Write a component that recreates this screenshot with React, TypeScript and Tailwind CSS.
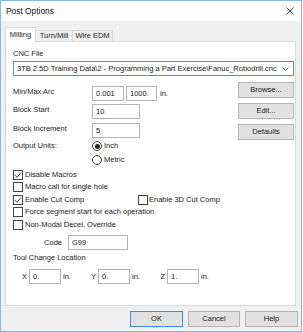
import React from "react";

const font = { fontFamily: '"Liberation Sans", Arial, sans-serif' };

function TextBox({ value, w }: { value: string; w: string }) {
  return (
    <div className={`${w} h-[15px] bg-white border border-[#b4b4b4] flex items-center pl-[3px] text-[7.5px] text-[#1a1a1a] leading-none`}>
      {value}
    </div>
  );
}

function Check({ checked }: { checked?: boolean }) {
  return (
    <div className="w-[10px] h-[10px] border border-[#444] bg-white flex items-center justify-center shrink-0">
      {checked && (
        <svg width="8" height="8" viewBox="0 0 8 8">
          <path d="M1 4.2 L3 6.3 L7 1.5" stroke="#333" strokeWidth="1" fill="none" />
        </svg>
      )}
    </div>
  );
}

function Radio({ on }: { on?: boolean }) {
  return (
    <div className="w-[10px] h-[10px] rounded-full border border-[#444] bg-white flex items-center justify-center shrink-0">
      {on && <div className="w-[5px] h-[5px] rounded-full bg-[#222]" />}
    </div>
  );
}

function Btn({ label, primary, w }: { label: string; primary?: boolean; w: string }) {
  return (
    <div
      className={`${w} h-[16px] flex items-center justify-center text-[7.5px] text-[#1a1a1a] bg-[#e1e1e1] border ${
        primary ? "border-[#3f8fdc]" : "border-[#b4b4b4]"
      }`}
    >
      {label}
    </div>
  );
}

function CheckRow({ label, checked, h }: { label: string; checked?: boolean; h: string }) {
  return (
    <div className={`${h} flex items-center`}>
      <Check checked={checked} />
      <span className="ml-[2px]">{label}</span>
    </div>
  );
}

export default function App() {
  return (
    <div
      className="w-[302px] h-[332px] bg-[#f0f0f0] border border-[#86b6e6] flex flex-col text-[#1a1a1a] text-[7.5px] leading-none overflow-hidden"
      style={font}
    >
      {/* Title bar */}
      <div className="h-[20px] bg-white flex items-center justify-between pl-[5px] pr-[7px] shrink-0">
        <span className="text-[8.4px] text-[#111]">Post Options</span>
        <svg width="8" height="8" viewBox="0 0 8 8">
          <path d="M0.5 0.5 L7.5 7.5 M7.5 0.5 L0.5 7.5" stroke="#333" strokeWidth="0.9" />
        </svg>
      </div>

      {/* Tabs */}
      <div className="mt-[6px] ml-[4px] h-[14px] flex items-end shrink-0">
        <div className="relative z-10 w-[31px] h-[15px] -mb-[1px] bg-white border border-b-0 border-[#d9d9d9] flex items-center justify-center">
          Milling
        </div>
        <div className="w-[37px] h-[11px] border border-b-0 border-l-0 border-[#d9d9d9] flex items-center justify-center">
          Turn/Mill
        </div>
        <div className="w-[40px] h-[11px] border border-b-0 border-l-0 border-[#d9d9d9] flex items-center justify-center">
          Wire EDM
        </div>
      </div>

      {/* Panel */}
      <div className="ml-[4px] w-[291px] h-[265px] bg-white border border-[#d9d9d9] flex flex-col pl-[7px] pr-[1px] shrink-0">
        <div className="mt-[6px] h-[12px] flex items-center">CNC File</div>
        <div className="mt-[1px] h-[15px] border border-[#4a94dd] flex items-center justify-between pl-[3px] pr-[4px]">
          <span className="whitespace-nowrap">3TB 2.5D Training Data\2 - Programming a Part Exercise\Fanuc_Robodrill.cnc</span>
          <svg width="7" height="4" viewBox="0 0 7 4">
            <path d="M0.5 0.5 L3.5 3.5 L6.5 0.5" stroke="#444" strokeWidth="0.8" fill="none" />
          </svg>
        </div>

        <div className="mt-[6px] flex justify-between">
          <div className="flex flex-col pt-[4px]">
            <div className="h-[15px] flex items-center">
              <span className="w-[79px] mb-[4px]">Min/Max Arc</span>
              <TextBox value="0.001" w="w-[32px]" />
              <div className="ml-[2px]">
                <TextBox value="1000." w="w-[31px]" />
              </div>
              <span className="ml-[3px]">in.</span>
            </div>
            <div className="mt-[3px] h-[15px] flex items-center">
              <span className="w-[79px] mb-[4px]">Block Start</span>
              <TextBox value="10" w="w-[48px]" />
            </div>
            <div className="mt-[4px] h-[15px] flex items-center">
              <span className="w-[79px] mb-[4px]">Block Increment</span>
              <TextBox value="5" w="w-[48px]" />
            </div>
            <div className="mt-[2px] h-[12px] flex items-center">
              <span className="w-[79px]">Output Units:</span>
              <Radio on />
              <span className="ml-[2px]">Inch</span>
            </div>
            <div className="mt-[2px] h-[12px] flex items-center">
              <span className="w-[79px]" />
              <Radio />
              <span className="ml-[2px]">Metric</span>
            </div>
          </div>
          <div className="flex flex-col w-[56px]">
            <Btn label="Browse..." w="w-[56px]" />
            <div className="mt-[5px]">
              <Btn label="Edit..." w="w-[56px]" />
            </div>
            <div className="mt-[5px]">
              <Btn label="Defaults" w="w-[56px]" />
            </div>
          </div>
        </div>

        <div className="mt-[2px] flex flex-col">
          <CheckRow h="h-[13px]" label="Disable Macros" checked />
          <CheckRow h="h-[12px]" label="Macro call for single hole" />
          <div className="h-[13px] flex items-center">
            <div className="w-[125px] flex items-center">
              <Check checked />
              <span className="ml-[2px]">Enable Cut Comp</span>
            </div>
            <Check />
            <span className="ml-[1px]">Enable 3D Cut Comp</span>
          </div>
          <CheckRow h="h-[12px]" label="Force segment start for each operation" />
          <CheckRow h="h-[13px]" label="Non-Modal Decel. Override" />
        </div>

        <div className="mt-[4px] h-[15px] flex items-center">
          <span className="w-[49px] text-right">Code</span>
          <div className="ml-[6px]">
            <TextBox value="G99" w="w-[60px]" />
          </div>
        </div>

        <div className="mt-[2px] h-[12px] flex items-center">Tool Change Location</div>

        <div className="mt-[5px] h-[15px] flex items-center">
          {[
            ["X", "0."],
            ["Y", "0."],
            ["Z", "1."],
          ].map(([l, v]) => (
            <div key={l} className="w-[69px] flex items-center">
              <span className="w-[16px] text-right pr-[2px]">{l}</span>
              <TextBox value={v} w="w-[32px]" />
              <span className="ml-[2px]">in.</span>
            </div>
          ))}
        </div>
      </div>

      {/* Bottom buttons */}
      <div className="mt-[5px] flex pl-[129px] gap-[5px] shrink-0">
        <Btn label="OK" primary w="w-[53px]" />
        <Btn label="Cancel" w="w-[52px]" />
        <Btn label="Help" w="w-[53px]" />
      </div>
    </div>
  );
}
